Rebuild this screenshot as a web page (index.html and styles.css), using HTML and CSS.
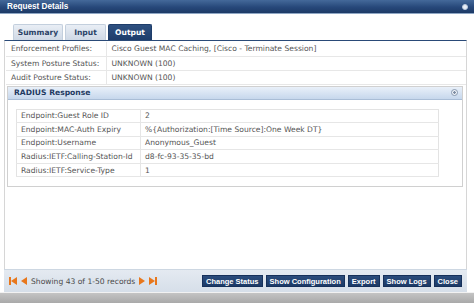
FILE: index.html
```html
<!DOCTYPE html>
<html lang="en">
<head>
  <meta charset="UTF-8">
  <title>Request Details</title>
  <link rel="stylesheet" href="styles.css">
</head>
<body>
  <div class="dialog">
    <div class="titlebar">
      <span class="title">Request Details</span>
      <span class="title-icon"></span>
    </div>

    <div class="content">
      <div class="tabs">
        <div class="tab">Summary</div>
        <div class="tab">Input</div>
        <div class="tab active">Output</div>
      </div>

      <div class="panel">
        <table class="info">
          <tr><td class="label">Enforcement Profiles:</td><td>Cisco Guest MAC Caching, [Cisco - Terminate Session]</td></tr>
          <tr><td class="label">System Posture Status:</td><td>UNKNOWN (100)</td></tr>
          <tr><td class="label">Audit Posture Status:</td><td>UNKNOWN (100)</td></tr>
        </table>

        <div class="section">
          <div class="section-head">
            <span>RADIUS Response</span>
            <span class="collapse"></span>
          </div>
          <table class="attrs">
            <tr><td class="key">Endpoint:Guest Role ID</td><td>2</td></tr>
            <tr><td class="key">Endpoint:MAC-Auth Expiry</td><td>%{Authorization:[Time Source]:One Week DT}</td></tr>
            <tr><td class="key">Endpoint:Username</td><td>Anonymous_Guest</td></tr>
            <tr><td class="key">Radius:IETF:Calling-Station-Id</td><td>d8-fc-93-35-35-bd</td></tr>
            <tr><td class="key">Radius:IETF:Service-Type</td><td>1</td></tr>
          </table>
        </div>
      </div>

      <div class="footer">
        <div class="pager">
          <span class="nav first"></span>
          <span class="nav prev"></span>
          <span class="pager-text">Showing 43 of 1-50 records</span>
          <span class="nav next"></span>
          <span class="nav last"></span>
        </div>
        <div class="actions">
          <button class="btn">Change Status</button>
          <button class="btn">Show Configuration</button>
          <button class="btn">Export</button>
          <button class="btn">Show Logs</button>
          <button class="btn">Close</button>
        </div>
      </div>
    </div>

    <div class="bottom-bar"></div>
  </div>
</body>
</html>
```

FILE: styles.css
```css
* { margin: 0; padding: 0; box-sizing: border-box; }
html, body {
  width: 474px;
  height: 303px;
  overflow: hidden;
  background: #fff;
  font-family: 'DejaVu Sans', Verdana, sans-serif;
  font-size: 7.6px;
  color: #555;
}
.dialog {
  display: flex;
  flex-direction: column;
  height: 303px;
}
.titlebar {
  height: 14px;
  display: flex;
  align-items: center;
  justify-content: space-between;
  padding: 0 6px 0 7px;
  background: linear-gradient(to bottom, #44699a, #27487a 55%, #1d3a66);
  border-bottom: 1px solid #8ea6c4;
}
.title {
  color: #fff;
  font-family: 'Liberation Sans', Arial, sans-serif;
  font-weight: bold;
  font-size: 8.2px;
}
.title-icon {
  width: 6px;
  height: 6px;
  border-radius: 50%;
  background: #e8eef6;
  border: 1px solid #b8c8dc;
}
.content {
  flex: 1;
  display: flex;
  flex-direction: column;
  padding: 10px 4px 0 4px;
}
.tabs {
  display: flex;
  gap: 2px;
  padding-left: 9px;
  height: 16px;
}
.tab {
  display: flex;
  align-items: center;
  justify-content: center;
  padding: 0 10px;
  font-weight: bold;
  color: #2c4468;
  background: linear-gradient(to bottom, #e9eef5, #cfd9e6);
  border: 1px solid #c3cfdd;
  border-bottom: none;
  border-radius: 2px 2px 0 0;
}
.tab:first-child { width: 50px; }
.tab:nth-child(2) { width: 41px; }
.tab.active {
  width: 44px;
  color: #fff;
  background: linear-gradient(to bottom, #2e5080, #1e3d6a);
  border-color: #1e3d6a;
}
.panel {
  flex: 1;
  border-top: 1px solid #2a4a78;
  border-left: 1px solid #d6d6d6;
  border-right: 1px solid #d6d6d6;
  margin-right: 3px;
  padding: 1px 0 0 1px;
}
table {
  border-collapse: collapse;
  width: 100%;
}
.info td {
  height: 14px;
  padding: 0 0 0 5px;
  border-bottom: 1px solid #e7e7e7;
  white-space: nowrap;
}
.info .label {
  width: 100px;
  border-right: 1px solid #e7e7e7;
}
.section {
  margin: 1px 3px 0 1px;
  border: 1px solid #d0d0d0;
  height: 101px;
}
.section-head {
  height: 13px;
  display: flex;
  align-items: center;
  justify-content: space-between;
  padding: 0 4px 0 6px;
  font-weight: bold;
  color: #1f3a62;
  background: linear-gradient(to bottom, #e9f0f9, #c6d7ec);
  border-bottom: 1px solid #a9bdd6;
}
.collapse {
  width: 7px;
  height: 7px;
  border-radius: 50%;
  border: 1px solid #8a9ab0;
  background: radial-gradient(circle, #7d8ca2 1px, #eef2f7 1.5px);
}
.attrs {
  width: 423px;
  margin: 9px 0 0 8px;
  border: 1px solid #e3e3e3;
}
.attrs td {
  height: 13.6px;
  padding: 0 0 0 4px;
  border-bottom: 1px solid #e6e6e6;
  white-space: nowrap;
}
.attrs .key {
  width: 124px;
  border-right: 1px solid #e6e6e6;
}
.footer {
  height: 23px;
  margin-right: 3px;
  display: flex;
  align-items: center;
  justify-content: space-between;
  padding: 0 5px 0 5px;
  background: linear-gradient(to bottom, #e4eaf1, #d6dfe9);
  border-top: 1px solid #cdd7e2;
}
.pager {
  display: flex;
  align-items: center;
  gap: 2px;
}
.pager-text { margin: 0 2px; color: #4a4a4a; }
.nav {
  width: 0;
  height: 0;
  border-top: 4px solid transparent;
  border-bottom: 4px solid transparent;
}
.prev, .first { border-right: 6px solid #e8771c; }
.next, .last { border-left: 6px solid #e8771c; }
.first { box-shadow: -2px 0 0 0 #e8771c; margin-left: 2px; }
.last { box-shadow: 2px 0 0 0 #e8771c; margin-right: 2px; }
.prev { margin-left: 2px; }
.next { margin-right: 2px; }
.actions {
  display: flex;
  gap: 3px;
}
.btn {
  height: 12px;
  padding: 0 3px;
  border: 1px solid #16305a;
  background: linear-gradient(to bottom, #2b4c7c, #1c3a66);
  color: #fff;
  font-family: 'Liberation Sans', Arial, sans-serif;
  font-weight: bold;
  font-size: 7.5px;
}
.bottom-bar {
  height: 11px;
  background: linear-gradient(to bottom, #c4c4c4, #a9a9a9);
  border-top: 1px solid #f2f2f2;
}
```
